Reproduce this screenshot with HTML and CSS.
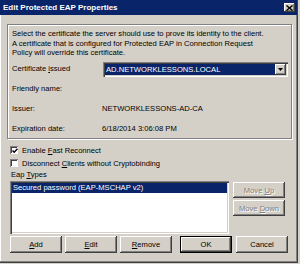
FILE: index.html
```html
<!DOCTYPE html>
<html>
<head>
<meta charset="utf-8">
<link rel="stylesheet" href="styles.css">
</head>
<body>
<div class="window">
  <div class="titlebar">
    <span class="title">Edit Protected EAP Properties</span>
    <span class="close"><svg width="7" height="6" viewBox="0 0 7 6"><path d="M0.5 0.5 L6.5 5.5 M6.5 0.5 L0.5 5.5" stroke="#000" stroke-width="1.4" fill="none"/></svg></span>
  </div>
  <div class="content">
    <div class="group">
      <p class="intro">Select the certificate the server should use to prove its identity to the client.<br>A certificate that is configured for Protected EAP in Connection Request<br>Policy will override this certificate.</p>
      <div class="row">
        <span class="label">Certificate <u>i</u>ssued</span>
        <div class="combo">
          <span class="combo-value">AD.NETWORKLESSONS.LOCAL</span>
          <span class="combo-btn"><svg width="5" height="3" viewBox="0 0 5 3"><path d="M0 0 H5 L2.5 3 Z" fill="#000"/></svg></span>
        </div>
      </div>
      <div class="row"><span class="label">Friendly name:</span></div>
      <div class="row"><span class="label">Issuer:</span><span class="value">NETWORKLESSONS-AD-CA</span></div>
      <div class="row"><span class="label">Expiration date:</span><span class="value">6/18/2014 3:06:08 PM</span></div>
    </div>
    <div class="check check-first"><span class="box"><svg width="6" height="6" viewBox="0 0 6 6"><path d="M0.5 2.5 L2.2 4.3 L5.5 0.8" stroke="#000" stroke-width="1.4" fill="none"/></svg></span><span>Enable <u>F</u>ast Reconnect</span></div>
    <div class="check"><span class="box"></span><span>Disconnect <u>C</u>lients without Cryptobinding</span></div>
    <div class="eap-label">Eap <u>T</u>ypes</div>
    <div class="eap-area">
      <div class="list">
        <div class="item selected">Secured password (EAP-MSCHAP v2)</div>
      </div>
      <div class="side">
        <button class="btn" disabled>Move <u>U</u>p</button>
        <button class="btn" disabled>Move <u>D</u>own</button>
      </div>
    </div>
    <div class="buttons">
      <button class="btn"><u>A</u>dd</button>
      <button class="btn btn-edit"><u>E</u>dit</button>
      <button class="btn btn-remove"><u>R</u>emove</button>
      <button class="btn btn-ok">OK</button>
      <button class="btn btn-cancel">Cancel</button>
    </div>
  </div>
</div>
</body>
</html>
```
FILE: styles.css
```css
* { box-sizing: border-box; margin: 0; padding: 0; }
html, body { width: 300px; height: 264px; overflow: hidden; }
body {
  background: #d4d0c8;
  font-family: "Liberation Sans", Arial, sans-serif;
  font-size: 7.6px;
  color: #000;
}
u { text-underline-offset: 1px; }
.window {
  width: 298px;
  height: 263px;
  background: #d4d0c8;
  box-shadow: inset -1px -1px 0 #404040, inset -2px -2px 0 #808080, inset 1px 0 0 #fff;
}
.titlebar {
  height: 15px;
  margin-right: 1px;
  background: #0a246a;
  display: flex;
  align-items: center;
  justify-content: space-between;
  padding: 0 2px 0 3px;
}
.title { color: #fff; font-weight: bold; font-size: 8px; }
.close {
  width: 11px;
  height: 9px;
  background: #d4d0c8;
  box-shadow: inset -1px -1px 0 #404040, inset 1px 1px 0 #fff, inset -2px -2px 0 #808080;
  display: flex;
  align-items: center;
  justify-content: center;
}
.close svg { display: block; }
.content { padding: 9px 0 0 7px; }
.group {
  width: 285px;
  height: 115px;
  border: 1px solid #808080;
  box-shadow: 1px 1px 0 #fff, inset 1px 1px 0 #fff;
  padding: 4px 0 0 4px;
}
.intro { line-height: 9.5px; height: 29px; }
.row { display: flex; align-items: center; height: 20px; }
.label { width: 90px; flex: none; }
.combo {
  margin-left: 1px;
  margin-top: 2px;
  width: 185px;
  height: 15px;
  display: flex;
  padding: 2px;
  background: #fff;
  box-shadow: inset 1px 1px 0 #808080, inset 2px 2px 0 #404040, inset -1px -1px 0 #fff, inset -2px -2px 0 #d4d0c8;
}
.combo-value {
  flex: 1;
  background: #0a246a;
  color: #fff;
  line-height: 11px;
  padding-left: 1px;
}
.combo-btn {
  width: 11px;
  height: 11px;
  background: #d4d0c8;
  box-shadow: inset -1px -1px 0 #404040, inset 1px 1px 0 #fff, inset -2px -2px 0 #808080;
  display: flex;
  align-items: center;
  justify-content: center;
}
.combo-btn svg { display: block; }
.check { display: flex; align-items: center; height: 13px; margin-left: 3px; }
.check-first { margin-top: 4.5px; }
.box {
  width: 8px;
  height: 8px;
  margin-right: 4px;
  background: #fff;
  box-shadow: inset 1px 1px 0 #808080, inset -1px -1px 0 #fff, inset 2px 2px 0 #404040;
  display: flex;
  align-items: center;
  justify-content: center;
}
.box svg { display: block; margin: 1px 0 0 1px; }
.eap-label { margin-left: 4px; line-height: 10px; }
.eap-area { display: flex; margin-top: 1.5px; margin-left: 3px; }
.list {
  width: 219px;
  height: 53px;
  background: #fff;
  padding: 2px;
  box-shadow: inset 1px 1px 0 #808080, inset 2px 2px 0 #404040, inset -1px -1px 0 #fff, inset -2px -2px 0 #d4d0c8;
}
.item { height: 10px; line-height: 10px; padding-left: 1px; }
.item.selected { background: #0a246a; color: #fff; }
.side { margin-left: 4px; display: flex; flex-direction: column; gap: 2px; padding-top: 1px; }
.btn {
  appearance: none;
  border: none;
  width: 52px;
  height: 16px;
  background: #d4d0c8;
  font-family: inherit;
  font-size: inherit;
  color: #000;
  text-align: center;
  white-space: nowrap;
  box-shadow: inset -1px -1px 0 #404040, inset 1px 1px 0 #fff, inset -2px -2px 0 #808080;
}
.btn:disabled { color: #808080; text-shadow: 1px 1px 0 #fff; }
.buttons { display: flex; margin-top: 2px; margin-left: 3px; }
.buttons .btn { height: 17px; }
.btn-edit { margin-left: 3px; }
.btn-remove { margin-left: 3px; }
.btn-ok { margin-left: 8px; border: 1px solid #000; }
.btn-cancel { margin-left: 4px; }
```
